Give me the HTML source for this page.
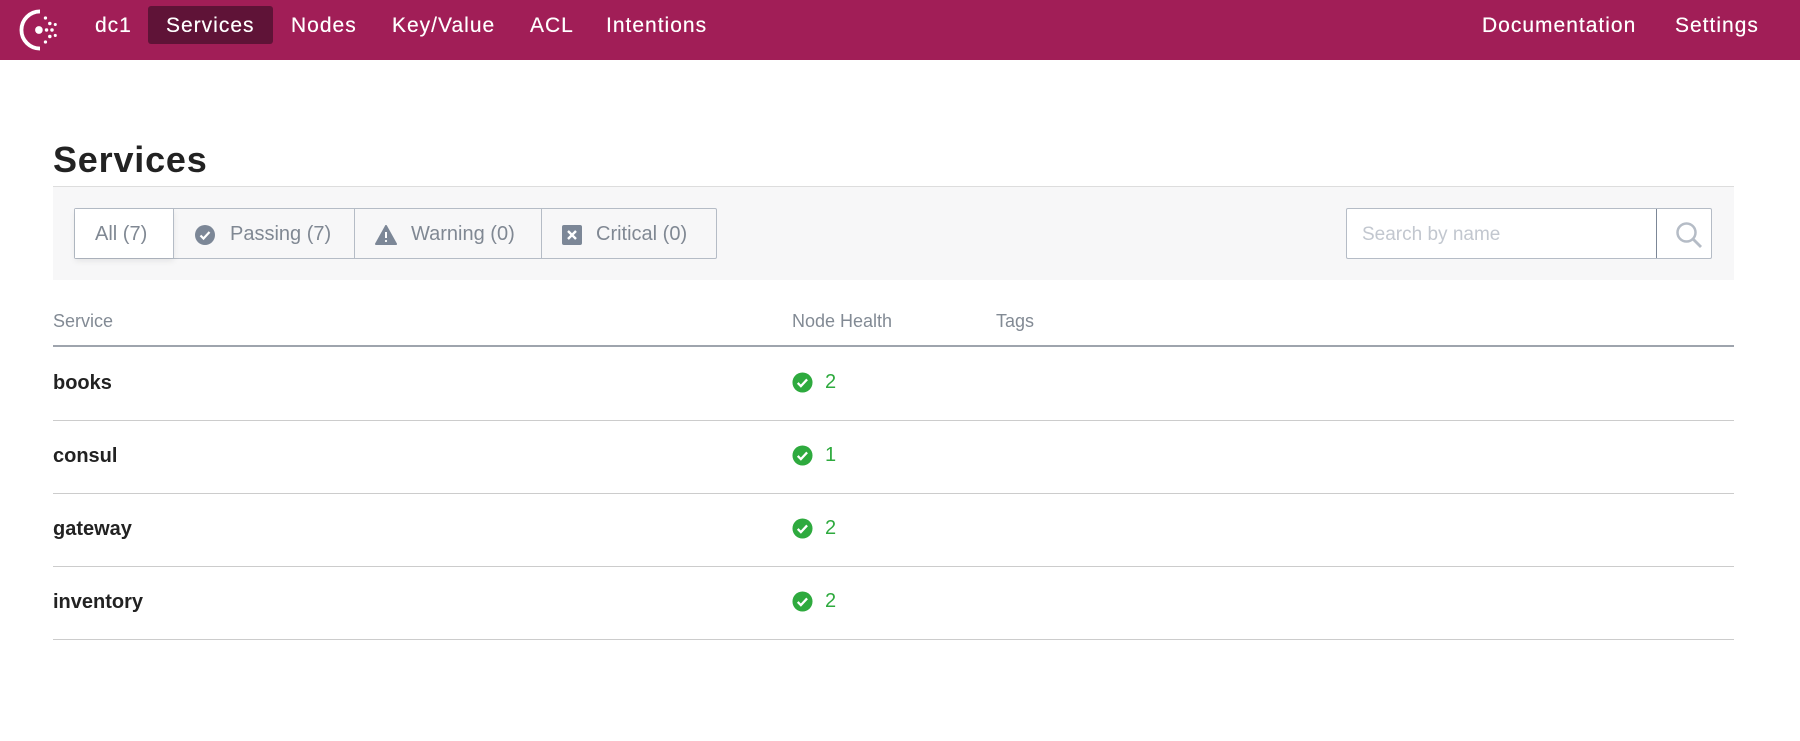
<!DOCTYPE html>
<html><head><meta charset="utf-8"><style>
*{margin:0;padding:0;box-sizing:border-box}
body{width:1800px;height:741px;background:#fff;font-family:"Liberation Sans",sans-serif;position:relative;overflow:hidden}
.hdr{position:absolute;left:0;top:0;width:1800px;height:60px;background:#a11e57}
.nav{position:absolute;top:13px;color:#fff;font-size:21px;line-height:25px;letter-spacing:1px;text-shadow:0 0 .4px #fff}
.act{position:absolute;left:148px;top:6px;width:125px;height:38px;background:#5f1337;border-radius:3px}
.abs{position:absolute}
h1{position:absolute;left:53px;top:139px;font-size:36px;font-weight:bold;color:#222;letter-spacing:.8px}
.line{position:absolute;left:53px;width:1681px;height:1px;background:#ccc}
.filter{position:absolute;left:53px;top:186px;width:1681px;height:94px;background:#f7f7f8;border-top:1px solid #ddd}
.btns{position:absolute;left:74px;top:208px;width:643px;height:51px;border:1px solid #b5bcc6;border-radius:2px;display:flex;background:#f7f7f8}
.btns div{height:100%;border-right:1px solid #b5bcc6;display:flex;align-items:center;color:#808893;font-size:20px;padding-left:20px;gap:14px;padding-top:2px}
.btns div:last-child{border-right:none}
.search{position:absolute;left:1346px;top:208px;width:366px;height:51px;border:1px solid #b5bcc6;border-radius:2px;background:#fff}
.th{position:absolute;top:311px;font-size:18px;color:#828a94}
.name{position:absolute;left:53px;font-size:20px;font-weight:bold;color:#222}
.hl{position:absolute;left:792px;display:flex;align-items:center;gap:12px;color:#2eaa3e;font-size:20px}
</style></head><body>
<div class="hdr">
<svg class="abs" style="left:16px;top:6px" width="48" height="48" viewBox="0 0 44 40">
<path d="M22 3 A17 17 0 1 0 22 37" fill="none" stroke="#fff" stroke-width="3.5"/>
<circle cx="21" cy="20" r="3.5" fill="#fff"/>
<circle cx="28" cy="20" r="1.6" fill="#fff"/><circle cx="33" cy="20" r="1.6" fill="#fff"/>
<circle cx="31" cy="14" r="1.6" fill="#fff"/><circle cx="31" cy="26" r="1.6" fill="#fff"/>
<circle cx="36" cy="15" r="1.4" fill="#fff"/><circle cx="36" cy="25" r="1.4" fill="#fff"/>
<circle cx="27" cy="9" r="1.5" fill="#fff"/><circle cx="27" cy="31" r="1.5" fill="#fff"/>
</svg>
<div class="act"></div>
<span class="nav" style="left:95px">dc1</span>
<span class="nav" style="left:166px">Services</span>
<span class="nav" style="left:291px">Nodes</span>
<span class="nav" style="left:392px">Key/Value</span>
<span class="nav" style="left:530px">ACL</span>
<span class="nav" style="left:606px">Intentions</span>
<span class="nav" style="left:1482px">Documentation</span>
<span class="nav" style="left:1675px">Settings</span>
</div>
<h1>Services</h1>
<div class="filter"></div>
<div class="btns">
<div style="width:99px;background:#fff;box-shadow:0 3px 6px rgba(0,0,0,.08)">All (7)</div>
<div style="width:181px"><svg width="22" height="22" viewBox="0 0 22 22"><circle cx="11" cy="11" r="10" fill="#7c8797"/><path d="M6.5 11.5l3 3 6-6.5" stroke="#fff" stroke-width="2.2" fill="none"/></svg>Passing (7)</div>
<div style="width:187px"><svg width="22" height="20" viewBox="0 0 22 20"><path d="M11 1 L21 19 H1 Z" fill="#7c8797" stroke="#7c8797" stroke-linejoin="round" stroke-width="2"/><path d="M11 7v6" stroke="#fff" stroke-width="2"/><circle cx="11" cy="16" r="1.1" fill="#fff"/></svg>Warning (0)</div>
<div style="flex:1"><svg width="20" height="20" viewBox="0 0 20 20"><rect width="20" height="20" rx="2" fill="#7c8797"/><path d="M6 6l8 8M14 6l-8 8" stroke="#fff" stroke-width="2.4"/></svg>Critical (0)</div>
</div>
<div class="search">
<span class="abs" style="left:15px;top:15px;font-size:19px;color:#c2c7cf">Search by name</span>
<div class="abs" style="left:309px;top:0;width:1px;height:49px;background:#7c8797"></div>
<svg class="abs" style="left:328px;top:12px" width="28" height="28" viewBox="0 0 28 28"><circle cx="11.5" cy="11.5" r="9" fill="none" stroke="#b5bcc6" stroke-width="2.5"/><path d="M18 18l8 8" stroke="#b5bcc6" stroke-width="2.8"/></svg>
</div>
<span class="th" style="left:53px">Service</span>
<span class="th" style="left:792px">Node Health</span>
<span class="th" style="left:996px">Tags</span>
<div class="line" style="top:345px;height:2px;background:#9ea4ad"></div>
<div class="line" style="top:420px"></div>
<div class="line" style="top:493px"></div>
<div class="line" style="top:566px"></div>
<div class="line" style="top:639px"></div>
<span class="name" style="top:372px">books</span>
<span class="name" style="top:445px">consul</span>
<span class="name" style="top:518px">gateway</span>
<span class="name" style="top:591px">inventory</span>
<div class="hl" style="top:371px"><svg width="21" height="21" viewBox="0 0 22 22"><circle cx="11" cy="11" r="10.5" fill="#2eaa3e"/><path d="M6 11.5l3.3 3.3 6.5-7" stroke="#fff" stroke-width="2.4" fill="none"/></svg>2</div>
<div class="hl" style="top:444px"><svg width="21" height="21" viewBox="0 0 22 22"><circle cx="11" cy="11" r="10.5" fill="#2eaa3e"/><path d="M6 11.5l3.3 3.3 6.5-7" stroke="#fff" stroke-width="2.4" fill="none"/></svg>1</div>
<div class="hl" style="top:517px"><svg width="21" height="21" viewBox="0 0 22 22"><circle cx="11" cy="11" r="10.5" fill="#2eaa3e"/><path d="M6 11.5l3.3 3.3 6.5-7" stroke="#fff" stroke-width="2.4" fill="none"/></svg>2</div>
<div class="hl" style="top:590px"><svg width="21" height="21" viewBox="0 0 22 22"><circle cx="11" cy="11" r="10.5" fill="#2eaa3e"/><path d="M6 11.5l3.3 3.3 6.5-7" stroke="#fff" stroke-width="2.4" fill="none"/></svg>2</div>
</body></html>
